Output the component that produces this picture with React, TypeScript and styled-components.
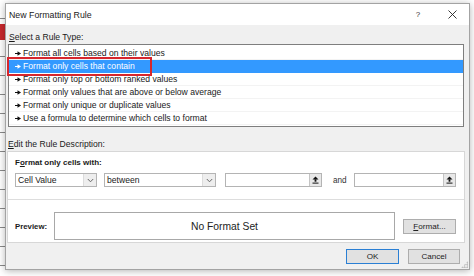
import styled, { createGlobalStyle } from 'styled-components';

const GlobalStyle = createGlobalStyle`
  body {
    margin: 0;
    background: #ffffff;
    font-family: "Liberation Sans", Arial, sans-serif;
  }
`;

const Page = styled.div`
  position: relative;
  width: 474px;
  height: 276px;
  overflow: hidden;
  background: #ffffff;
`;

// bit of the worksheet that peeks out left of the dialog
const SheetEdge = styled.div`
  position: absolute;
  left: 0;
  top: 0;
  width: 6px;
  height: 100%;
  background: repeating-linear-gradient(
    to bottom,
    #ffffff 0,
    #ffffff 18px,
    #8a8a8a 18px,
    #8a8a8a 19px
  );
`;

const RedCell = styled.div`
  position: absolute;
  left: 0;
  top: 24px;
  width: 6px;
  height: 16px;
  background: #c8282d;
`;

const Dialog = styled.div`
  position: absolute;
  left: 5px;
  top: 3px;
  width: 465px;
  height: 267px;
  box-sizing: border-box;
  background: #f0f0f0;
  border: 1px solid #a3a3a3;
  box-shadow: 0 1px 7px rgba(0, 0, 0, 0.3);
  display: flex;
  flex-direction: column;
  font-family: "Liberation Sans", Arial, sans-serif;
  font-size: 8.6px;
  color: #1a1a1a;
`;

const TitleBar = styled.div`
  height: 21px;
  background: #ffffff;
  display: flex;
  align-items: center;
  padding-left: 3px;
  font-size: 8.8px;
`;

const Title = styled.span`
  flex: 1;
`;

const TitleButton = styled.span`
  width: 34px;
  display: flex;
  justify-content: center;
  align-items: center;
  color: #333;
  font-size: 8px;
`;

const Body = styled.div`
  flex: 1;
  display: flex;
  flex-direction: column;
  padding: 0 5px 0 2px;
`;

const Label = styled.div<{ $top: number }>`
  margin-top: ${(p) => p.$top}px;
  line-height: 12px;
  height: 12px;
  padding-left: ${(p) => (p.$top > 8 ? 0 : 1)}px;
`;

const Key = styled.span`
  text-decoration: underline;
  text-underline-offset: 1px;
`;

const RuleList = styled.div`
  position: relative;
  margin-top: 1px;
  border: 1px solid #7e7e7e;
  background: #ffffff;
  padding: 2px 0 1px;
`;

const RuleRow = styled.div<{ $selected?: boolean }>`
  height: 13px;
  box-sizing: border-box;
  display: flex;
  align-items: center;
  gap: 2px;
  padding-left: 6px;
  border-bottom: 1px solid ${(p) => (p.$selected ? '#3399ff' : '#f3f3f3')};
  background: ${(p) => (p.$selected ? '#3399ff' : 'transparent')};
  color: ${(p) => (p.$selected ? '#ffffff' : '#1a1a1a')};
  white-space: nowrap;
`;

const Highlight = styled.div`
  position: absolute;
  left: -2px;
  top: 12px;
  width: 145px;
  height: 19px;
  box-sizing: border-box;
  border: 2.5px solid #d6262d;
  pointer-events: none;
`;

const DescBox = styled.div`
  margin: 1px -1px 0;
  height: 92px;
  box-sizing: border-box;
  border: 1px solid #d7d7d7;
  background: #ffffff;
  display: flex;
  flex-direction: column;
`;

const DescHead = styled.div`
  padding: 5px 0 0 7px;
  line-height: 12px;
  font-weight: 700;
  font-size: 8px;
`;

const ControlRow = styled.div`
  margin-top: 4px;
  padding-left: 7px;
  display: flex;
  align-items: center;
  height: 14px;
`;

const Select = styled.div<{ $w: number; $gap: number }>`
  width: ${(p) => p.$w}px;
  margin-right: ${(p) => p.$gap}px;
  height: 14px;
  box-sizing: border-box;
  border: 1px solid #b4b4b4;
  background: #ffffff;
  display: flex;
  align-items: center;
  padding-left: 2px;
`;

const SelectText = styled.span`
  flex: 1;
`;

const Chevron = styled.span`
  width: 12px;
  height: 12px;
  display: flex;
  align-items: center;
  justify-content: center;
  background: #eeeeee;
  border-left: 1px solid #dcdcdc;
`;

const RefInput = styled.div<{ $w: number }>`
  width: ${(p) => p.$w}px;
  height: 14px;
  box-sizing: border-box;
  border: 1px solid #b4b4b4;
  background: #ffffff;
  display: flex;
  justify-content: flex-end;
  align-items: center;
`;

const RefButton = styled.span`
  width: 12px;
  height: 12px;
  box-sizing: border-box;
  border-left: 1px solid #c4c4c4;
  background: #e8e8e8;
  display: flex;
  align-items: center;
  justify-content: center;
`;

const AndText = styled.span`
  margin: 0 7px 0 11px;
  font-size: 8.2px;
  color: #333;
`;

const Divider = styled.div`
  margin-top: 12px;
  height: 1px;
  background: #dddddd;
`;

const PreviewRow = styled.div`
  margin-top: 12px;
  padding-left: 7px;
  display: flex;
  align-items: center;
`;

const PreviewLabel = styled.span`
  width: 39px;
  font-weight: 700;
  font-size: 7.8px;
`;

const PreviewBox = styled.div`
  width: 341px;
  height: 28px;
  box-sizing: border-box;
  border: 1px solid #a8a8a8;
  display: flex;
  align-items: center;
  justify-content: center;
  font-size: 10.3px;
  color: #222;
`;

const Button = styled.button<{ $w: number; $default?: boolean }>`
  width: ${(p) => p.$w}px;
  height: 15px;
  padding: 0;
  box-sizing: border-box;
  font-family: inherit;
  font-size: 8.1px;
  color: #222;
  background: #e1e1e1;
  border: 1px solid ${(p) => (p.$default ? '#2a7fd4' : '#adadad')};
  display: flex;
  align-items: center;
  justify-content: center;
`;

const FormatButton = styled(Button)`
  margin-left: 8px;
`;

const Footer = styled.div`
  margin-top: 6px;
  display: flex;
  justify-content: flex-end;
  gap: 9px;
  padding-right: 4px;
`;

const Grip = styled.div`
  position: absolute;
  right: 1px;
  bottom: 1px;
  width: 7px;
  height: 7px;
  background: radial-gradient(circle, #b5b5b5 0.8px, transparent 1px) 0 0 / 2.5px 2.5px;
  clip-path: polygon(100% 0, 100% 100%, 0 100%);
`;

function RowArrow({ light }: { light?: boolean }) {
  const c = light ? '#ffffff' : '#111111';
  return (
    <svg width="6" height="5" viewBox="0 0 6 5">
      <rect x="0" y="2" width="3" height="1" fill={c} />
      <polygon points="2.5,0.3 6,2.5 2.5,4.7" fill={c} />
    </svg>
  );
}

function ChevronIcon() {
  return (
    <svg width="7" height="5" viewBox="0 0 7 5">
      <polyline points="0.8,1 3.5,3.8 6.2,1" fill="none" stroke="#6a6a6a" strokeWidth="1" />
    </svg>
  );
}

function CollapseIcon() {
  return (
    <svg width="7" height="8" viewBox="0 0 7 8">
      <polygon points="3.5,0.5 6.5,3.5 0.5,3.5" fill="#111" />
      <rect x="2.6" y="3.3" width="1.8" height="2.4" fill="#111" />
      <rect x="0.5" y="6.6" width="6" height="1" fill="#111" />
    </svg>
  );
}

function CloseIcon() {
  return (
    <svg width="9" height="9" viewBox="0 0 9 9">
      <path d="M0.5 0.5 L8.5 8.5 M8.5 0.5 L0.5 8.5" stroke="#222" strokeWidth="0.9" />
    </svg>
  );
}

const rules = [
  'Format all cells based on their values',
  'Format only cells that contain',
  'Format only top or bottom ranked values',
  'Format only values that are above or below average',
  'Format only unique or duplicate values',
  'Use a formula to determine which cells to format',
];

export default function App() {
  return (
    <>
      <GlobalStyle />
      <Page>
        <SheetEdge />
        <RedCell />
        <Dialog>
          <TitleBar>
            <Title>New Formatting Rule</Title>
            <TitleButton>?</TitleButton>
            <TitleButton>
              <CloseIcon />
            </TitleButton>
          </TitleBar>
          <Body>
            <Label $top={6}>
              <Key>S</Key>elect a Rule Type:
            </Label>
            <RuleList>
              {rules.map((r, i) => (
                <RuleRow key={r} $selected={i === 1}>
                  <RowArrow light={i === 1} />
                  {r}
                </RuleRow>
              ))}
              <Highlight />
            </RuleList>

            <Label $top={11}>
              <Key>E</Key>dit the Rule Description:
            </Label>
            <DescBox>
              <DescHead>
                F<Key>o</Key>rmat only cells with:
              </DescHead>
              <ControlRow>
                <Select $w={82} $gap={7}>
                  <SelectText>Cell Value</SelectText>
                  <Chevron>
                    <ChevronIcon />
                  </Chevron>
                </Select>
                <Select $w={112} $gap={9}>
                  <SelectText>between</SelectText>
                  <Chevron>
                    <ChevronIcon />
                  </Chevron>
                </Select>
                <RefInput $w={97}>
                  <RefButton>
                    <CollapseIcon />
                  </RefButton>
                </RefInput>
                <AndText>and</AndText>
                <RefInput $w={102}>
                  <RefButton>
                    <CollapseIcon />
                  </RefButton>
                </RefInput>
              </ControlRow>
              <Divider />
              <PreviewRow>
                <PreviewLabel>Preview:</PreviewLabel>
                <PreviewBox>No Format Set</PreviewBox>
                <FormatButton $w={53}>
                  <Key>F</Key>ormat...
                </FormatButton>
              </PreviewRow>
            </DescBox>
            <Footer>
              <Button $w={53} $default>
                OK
              </Button>
              <Button $w={52}>Cancel</Button>
            </Footer>
          </Body>
          <Grip />
        </Dialog>
      </Page>
    </>
  );
}
